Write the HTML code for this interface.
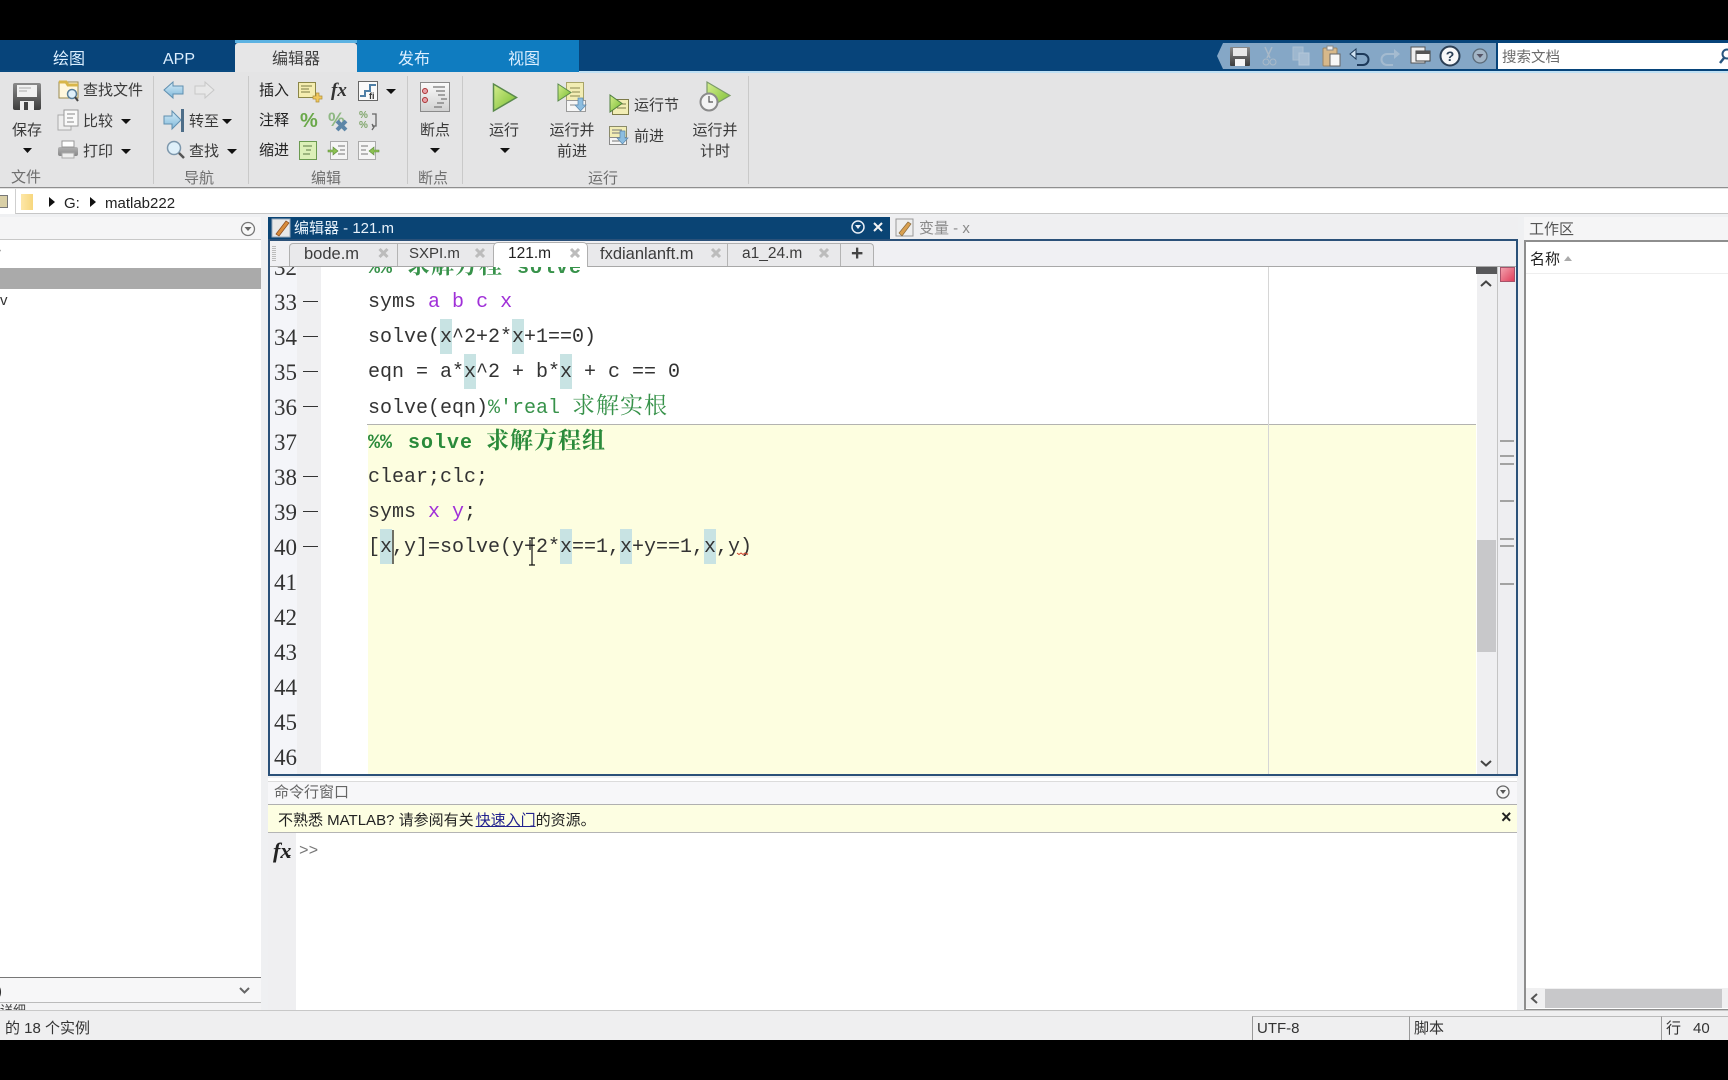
<!DOCTYPE html>
<html lang="zh">
<head>
<meta charset="utf-8">
<title>MATLAB</title>
<style>
html,body{margin:0;padding:0;width:1728px;height:1080px;overflow:hidden;background:#000}
body{position:relative;font-family:"Liberation Sans","Noto Sans CJK SC",sans-serif;color:#333}
.b{position:absolute}
.t{position:absolute;white-space:nowrap;line-height:1}
.c{transform:translateX(-50%)}
.rb{font-size:15px;color:#3a3a3a}
.lb{font-size:15px;color:#6e6e6e}
.tab{font-size:16px;color:#dcefff}
.code{position:absolute;left:368px;height:35px;line-height:37px;font-family:"Liberation Mono","Noto Serif CJK SC",monospace;font-size:20px;color:#333;white-space:pre}
.num{position:absolute;left:274px;width:24px;height:35px;line-height:37px;font-family:"Liberation Serif",serif;font-size:23px;color:#333}
.dash{position:absolute;left:303px;width:15px;height:1px;background:#333}
.hl{position:absolute;width:12px;height:35px;background:#c8e3e3}
.p{color:#a030d8}
.g{color:#37924a}
.cj{font-size:23px;letter-spacing:1px}
.ft{position:absolute;top:241px;height:26px;line-height:26px;font-size:15.500px;color:#3c3c3c;white-space:nowrap}
.mk{position:absolute;left:1500px;width:14px;height:2px;background:#a2a2a2}
</style>
</head>
<body>
<!-- tab strip -->
<div class="b" style="left:0;top:40px;width:1728px;height:32px;background:#07447a"></div>
<div class="b" style="left:357px;top:40px;width:222px;height:32px;background:#0f7cc0"></div>
<div class="b" style="left:235px;top:40px;width:122px;height:3px;background:#5cb2e2"></div>
<div class="b" style="left:235px;top:43px;width:122px;height:29px;background:#e6e6e7;border-radius:3px 3px 0 0"></div>
<div class="b" style="left:0;top:70px;width:235px;height:2px;background:#0a4a80"></div>
<div class="t tab" style="left:53px;top:52px">绘图</div>
<div class="t tab" style="left:163px;top:52px">APP</div>
<div class="t" style="left:272px;top:52px;font-size:16px;color:#404040">编辑器</div>
<div class="t tab" style="left:398px;top:52px">发布</div>
<div class="t tab" style="left:508px;top:52px">视图</div>
<!-- ribbon -->
<div class="b" style="left:0;top:72px;width:1728px;height:115px;background:#e4e4e5"></div>
<div class="b" style="left:579px;top:71px;width:1149px;height:2px;background:#bfe0f4"></div>
<div class="b" style="left:0;top:187px;width:1728px;height:1px;background:#8f8f8f"></div>
<div class="b" style="left:0;top:188px;width:1728px;height:1px;background:#e2e2e2"></div>
<!-- separators -->
<div class="b" style="left:153px;top:76px;width:1px;height:108px;background:#c9c9c9"></div>
<div class="b" style="left:248px;top:76px;width:1px;height:108px;background:#c9c9c9"></div>
<div class="b" style="left:407px;top:76px;width:1px;height:108px;background:#c9c9c9"></div>
<div class="b" style="left:462px;top:76px;width:1px;height:108px;background:#c9c9c9"></div>
<div class="b" style="left:748px;top:76px;width:1px;height:108px;background:#c9c9c9"></div>
<!-- ribbon text -->
<div class="t rb c" style="left:27px;top:123px">保存</div>
<div class="t lb c" style="left:26px;top:170px">文件</div>
<div class="t rb" style="left:83px;top:83px">查找文件</div>
<div class="t rb" style="left:83px;top:114px">比较</div>
<div class="t rb" style="left:83px;top:144px">打印</div>
<div class="t rb" style="left:189px;top:114px">转至</div>
<div class="t rb" style="left:189px;top:144px">查找</div>
<div class="t lb c" style="left:199px;top:171px">导航</div>
<div class="t rb" style="left:259px;top:83px;color:#222">插入</div>
<div class="t rb" style="left:259px;top:113px;color:#222">注释</div>
<div class="t rb" style="left:259px;top:143px;color:#222">缩进</div>
<div class="t lb c" style="left:326px;top:171px">编辑</div>
<div class="t rb c" style="left:435px;top:123px">断点</div>
<div class="t lb c" style="left:433px;top:171px">断点</div>
<div class="t rb c" style="left:504px;top:123px">运行</div>
<div class="t rb c" style="left:572px;top:123px">运行并</div>
<div class="t rb c" style="left:572px;top:144px">前进</div>
<div class="t rb" style="left:634px;top:98px">运行节</div>
<div class="t rb" style="left:634px;top:129px">前进</div>
<div class="t rb c" style="left:715px;top:123px">运行并</div>
<div class="t rb c" style="left:715px;top:144px">计时</div>
<div class="t lb c" style="left:603px;top:171px">运行</div>
<!-- address bar -->
<div class="b" style="left:0;top:189px;width:1728px;height:25px;background:#fff"></div>
<div class="b" style="left:15px;top:189px;width:1713px;height:25px;border-left:1px solid #cfcfcf;border-bottom:1px solid #c6c6c6;box-sizing:border-box"></div>
<div class="b" style="left:0;top:195px;width:8px;height:13px;background:#d9cfa6;border:1px solid #777;border-left:0;box-sizing:border-box"></div>
<div class="b" style="left:21px;top:194px;width:12px;height:16px;background:linear-gradient(90deg,#fde7a8,#f7d77e)"></div>
<div class="t" style="left:64px;top:196px;font-size:15px;color:#222">G:</div>
<div class="t" style="left:105px;top:196px;font-size:15px;color:#222">matlab222</div>
<!-- main background -->
<div class="b" style="left:0;top:214px;width:1728px;height:796px;background:#eff0f2"></div>
<!-- left panel -->
<div class="b" style="left:0;top:217px;width:261px;height:23px;background:#f5f5f6;border-bottom:1px solid #c8c8c8;box-sizing:border-box"></div>
<div class="b" style="left:0;top:240px;width:261px;height:737px;background:#fff"></div>
<div class="b" style="left:0;top:268px;width:261px;height:21px;background:#aaa"></div>
<div class="t" style="left:0;top:293px;font-size:15px;color:#333">v</div>
<div class="t" style="left:-5px;top:246px;font-size:12px;color:#888">▾</div>
<div class="b" style="left:0;top:977px;width:261px;height:26px;background:#f7f7f8;border-top:1px solid #777;border-bottom:1px solid #bbb;box-sizing:border-box"></div>
<div class="t" style="left:-3px;top:984px;font-size:15px;color:#333">)</div>
<div class="b" style="left:0;top:1003px;width:261px;height:7px;background:#f3f3f4"></div>
<div class="b" style="left:0;top:1004px;width:30px;height:6px;overflow:hidden"><div class="t" style="left:0;top:0;font-size:13px;color:#444">详细</div></div>
<!-- editor -->
<div class="b" style="left:268px;top:217px;width:622px;height:23px;background:#0a4474"></div>
<div class="b" style="left:890px;top:217px;width:628px;height:23px;background:#efeff1"></div>
<div class="t" style="left:294px;top:220px;font-size:15px;line-height:18px;color:#e8f2fb">编辑器 - 121.m</div>
<div class="t" style="left:919px;top:220px;font-size:15px;line-height:18px;color:#8a8a8a">变量 - x</div>
<div class="b" style="left:268px;top:240px;width:1250px;height:536px;box-sizing:border-box;border:2px solid #2b5179;border-top:none;background:#fff"></div>
<div class="b" style="left:268px;top:239px;width:1250px;height:2px;background:#2b5179"></div>
<!-- code gutter -->
<div class="b" style="left:270px;top:267px;width:27px;height:507px;background:#f4f5f9"></div>
<div class="b" style="left:297px;top:267px;width:24px;height:507px;background:#efeff1"></div>
<!-- yellow cell -->
<div class="b" style="left:368px;top:424px;width:1108px;height:350px;background:#fdfee0"></div>
<div class="b" style="left:367px;top:424px;width:1109px;height:1px;background:#b3b3b0"></div>
<div class="b" style="left:1268px;top:267px;width:1px;height:507px;background:#d6d6d6"></div>
<!-- highlights -->
<div class="hl" style="left:440px;top:319px"></div>
<div class="hl" style="left:512px;top:319px"></div>
<div class="hl" style="left:464px;top:354px"></div>
<div class="hl" style="left:560px;top:354px"></div>
<div class="hl" style="left:380px;top:529px"></div>
<div class="hl" style="left:560px;top:529px"></div>
<div class="hl" style="left:620px;top:529px"></div>
<div class="hl" style="left:704px;top:529px"></div>
<!-- line numbers -->
<div class="num" style="top:249px">32</div>
<div class="num" style="top:284px">33</div>
<div class="num" style="top:319px">34</div>
<div class="num" style="top:354px">35</div>
<div class="num" style="top:389px">36</div>
<div class="num" style="top:424px">37</div>
<div class="num" style="top:459px">38</div>
<div class="num" style="top:494px">39</div>
<div class="num" style="top:529px">40</div>
<div class="num" style="top:564px">41</div>
<div class="num" style="top:599px">42</div>
<div class="num" style="top:634px">43</div>
<div class="num" style="top:669px">44</div>
<div class="num" style="top:704px">45</div>
<div class="num" style="top:739px">46</div>
<div class="dash" style="top:301px"></div>
<div class="dash" style="top:336px"></div>
<div class="dash" style="top:371px"></div>
<div class="dash" style="top:406px"></div>
<div class="dash" style="top:476px"></div>
<div class="dash" style="top:511px"></div>
<div class="dash" style="top:546px"></div>
<!-- code -->
<div class="code g" style="top:249px;font-weight:bold">%% <span class="cj" style="margin-left:3px">求解方程</span> <span style="margin-left:2px;letter-spacing:1px">solve</span></div>
<div class="code" style="top:284px">syms <span class="p">a</span> <span class="p">b</span> <span class="p">c</span> <span class="p">x</span></div>
<div class="code" style="top:319px">solve(x^2+2*x+1==0)</div>
<div class="code" style="top:354px">eqn = a*x^2 + b*x + c == 0</div>
<div class="code" style="top:389px">solve(eqn)<span class="g">%'real <span class="cj">求解实根</span></span></div>
<div class="code g" style="top:424px;font-weight:bold;color:#2a8a3a">%% <span style="margin-left:4px;letter-spacing:1px">solve</span> <span class="cj" style="margin-left:1px">求解方程组</span></div>
<div class="code" style="top:459px">clear;clc;</div>
<div class="code" style="top:494px">syms <span class="p">x</span> <span class="p">y</span>;</div>
<div class="code" style="top:529px">[x,y]=solve(y+2*x==1,x+y==1,x,y)</div>
<!-- tab row (covers the clipped line) -->
<div class="b" style="left:270px;top:241px;width:1246px;height:26px;background:#f0f0f3;border-bottom:1px solid #a8a8a8;box-sizing:border-box"></div>
<div class="b" style="left:272px;top:246px;width:4px;height:16px;background:repeating-linear-gradient(#bbb 0 1px,transparent 1px 2px)"></div>
<div class="b" style="left:289px;top:243px;width:585px;height:23px;background:#e9e9eb;border:1px solid #b0b0b0;border-bottom:0;border-radius:4px 4px 0 0;box-sizing:border-box"></div>
<div class="b" style="left:397px;top:244px;width:1px;height:22px;background:#b4b4b4"></div>
<div class="b" style="left:727px;top:244px;width:1px;height:22px;background:#b4b4b4"></div>
<div class="b" style="left:840px;top:244px;width:1px;height:22px;background:#b4b4b4"></div>
<div class="b" style="left:493px;top:242px;width:95px;height:25px;background:#fff;border:1px solid #b0b0b0;border-bottom:0;border-radius:5px 5px 0 0;box-sizing:border-box"></div>
<div class="ft" style="left:304px;font-size:16.500px">bode.m</div>
<div class="ft" style="left:409px;font-size:15px">SXPI.m</div>
<div class="ft" style="left:508px;color:#222">121.m</div>
<div class="ft" style="left:600px;font-size:16.500px">fxdianlanft.m</div>
<div class="ft" style="left:742px">a1_24.m</div>
<div class="t" style="left:851px;top:244px;font-size:21px;font-weight:bold;line-height:20px;color:#444">+</div>
<!-- scrollbars in editor -->
<div class="b" style="left:1477px;top:267px;width:20px;height:507px;background:#efeff1"></div>
<div class="b" style="left:1497px;top:267px;width:19px;height:507px;background:#eeeef1;border-left:1px solid #c4c4c4;box-sizing:border-box"></div>
<div class="b" style="left:1476px;top:267px;width:21px;height:7px;background:#58585a"></div>
<div class="b" style="left:1500px;top:267px;width:15px;height:15px;background:linear-gradient(135deg,#f2a0ac,#e0405c);border:1px solid #a8526a;box-sizing:border-box"></div>
<div class="b" style="left:1477px;top:540px;width:19px;height:112px;background:#c8c8ca"></div>
<div class="mk" style="top:440px"></div>
<div class="mk" style="top:455px"></div>
<div class="mk" style="top:463px"></div>
<div class="mk" style="top:500px"></div>
<div class="mk" style="top:538px"></div>
<div class="mk" style="top:545px"></div>
<div class="mk" style="top:583px"></div>
<!-- command window -->
<div class="b" style="left:268px;top:778px;width:1249px;height:232px;background:#fff"></div>
<div class="b" style="left:268px;top:781px;width:1249px;height:24px;background:#f7f7f9;border-top:1px solid #dcdcdc;border-bottom:1px solid #b0b0b0;box-sizing:border-box"></div>
<div class="b" style="left:268px;top:805px;width:1249px;height:28px;background:#fdfee2;border-bottom:1px solid #b4b4b4;box-sizing:border-box"></div>
<div class="b" style="left:268px;top:833px;width:28px;height:177px;background:#efeff1"></div>
<div class="t" style="left:274px;top:785px;font-size:15px;color:#666">命令行窗口</div>
<div class="t" style="left:278px;top:813px;font-size:15px;color:#222">不熟悉 MATLAB? 请参阅有关<span style="color:#23238e;text-decoration:underline;margin-left:2px">快速入门</span>的资源。</div>
<div class="t" style="left:1501px;top:808px;font-size:18px;font-weight:bold;color:#222">×</div>
<div class="t" style="left:273px;top:840px;font-family:'Liberation Serif',serif;font-style:italic;font-weight:bold;font-size:22px;color:#222">fx</div>
<div class="t" style="left:299px;top:843px;font-family:'Liberation Mono',monospace;font-size:16px;color:#777">&gt;&gt;</div>
<!-- workspace -->
<div class="b" style="left:1524px;top:217px;width:204px;height:23px;background:#f5f5f6"></div>
<div class="b" style="left:1524px;top:240px;width:204px;height:770px;background:#fff;border:2px solid #8e8e8e;border-right:0;border-bottom-width:1px;box-sizing:border-box"></div>
<div class="t" style="left:1529px;top:222px;font-size:15px;color:#555">工作区</div>
<div class="t" style="left:1530px;top:252px;font-size:15px;color:#222">名称</div>
<div class="b" style="left:1526px;top:273px;width:202px;height:1px;background:#eee"></div>
<div class="b" style="left:1564px;top:256px;width:0;height:0;border-left:4px solid transparent;border-right:4px solid transparent;border-bottom:5px solid #aaa"></div>
<div class="b" style="left:1526px;top:988px;width:202px;height:20px;background:#f0f0f1"></div>
<div class="b" style="left:1545px;top:989px;width:177px;height:19px;background:#c8c8ca"></div>
<!-- status bar -->
<div class="b" style="left:0;top:1010px;width:1728px;height:30px;background:#efeff0;border-top:1px solid #c8c8c8;box-sizing:border-box"></div>
<div class="b" style="left:1252px;top:1016px;width:157px;height:24px;border-left:1px solid #999;border-top:1px solid #bbb;box-sizing:border-box"></div>
<div class="b" style="left:1409px;top:1016px;width:252px;height:24px;border-left:1px solid #999;border-top:1px solid #bbb;box-sizing:border-box"></div>
<div class="b" style="left:1661px;top:1016px;width:67px;height:24px;border-left:1px solid #999;border-top:1px solid #bbb;box-sizing:border-box"></div>
<div class="t" style="left:5px;top:1021px;font-size:15px;color:#333">的 18 个实例</div>
<div class="t" style="left:1257px;top:1021px;font-size:15px;color:#333">UTF-8</div>
<div class="t" style="left:1414px;top:1021px;font-size:15px;color:#333">脚本</div>
<div class="t" style="left:1666px;top:1021px;font-size:15px;color:#333">行</div>
<div class="t" style="left:1693px;top:1021px;font-size:15px;color:#333">40</div>
<!-- quick access -->
<div class="b" style="left:1217px;top:43px;width:279px;height:26px;background:#85a7c6;clip-path:polygon(6px 0,100% 0,100% 100%,6px 100%,0 50%)"></div>
<div class="b" style="left:1498px;top:43px;width:230px;height:26px;background:#fff"></div>
<div class="t" style="left:1502px;top:51px;font-size:14.500px;color:#6c6c6c">搜索文档</div>
<!-- icons -->
<svg class="b" style="left:0;top:0" width="1728" height="1080" viewBox="0 0 1728 1080" fill="none">
<defs>
<linearGradient id="gs" x1="0" y1="0" x2="0" y2="1"><stop offset="0" stop-color="#8a8a8a"/><stop offset="1" stop-color="#3d3d3d"/></linearGradient>
<linearGradient id="gg" x1="0" y1="0" x2="1" y2="1"><stop offset="0" stop-color="#d6ee8e"/><stop offset="1" stop-color="#74bb2e"/></linearGradient>
<linearGradient id="gb" x1="0" y1="0" x2="0" y2="1"><stop offset="0" stop-color="#d6ecf8"/><stop offset="1" stop-color="#7fb8da"/></linearGradient>
<linearGradient id="gp" x1="0" y1="0" x2="0" y2="1"><stop offset="0" stop-color="#fbfbfb"/><stop offset="1" stop-color="#d0d0d0"/></linearGradient>
</defs>
<!-- save big -->
<rect x="13" y="83" width="28" height="27" rx="2" fill="url(#gs)"/>
<rect x="17" y="85" width="20" height="12" fill="#f1f1f1"/>
<path d="M19 88h12M19 91h8" stroke="#aaa"/>
<rect x="20" y="101" width="14" height="9" fill="#eee"/><rect x="24" y="102" width="4" height="8" fill="#444"/>
<!-- dropdown arrows -->
<g fill="#111" transform="translate(0 1)">
<path d="M23 147h9l-4.500 5zM121 118h10l-5 5zM121 148h10l-5 5zM222 118h10l-5 5zM227 148h10l-5 5zM386 88h10l-5 5zM430 147h10l-5 5zM500 147h10l-5 5z"/>
</g>
<!-- find files -->
<path d="M59 82h19v16H59z" fill="#fff7dd" stroke="#9a8a50"/><path d="M59 82h7l2 3h10" stroke="#d8b64a" stroke-width="3"/>
<circle cx="72" cy="94" r="4.500" fill="#dff0fa" stroke="#5a7f9a" stroke-width="1.500"/><path d="M75 97l3 4" stroke="#444" stroke-width="2"/>
<!-- compare -->
<rect x="58" y="115" width="13" height="15" fill="#eee" stroke="#aaa"/><rect x="64" y="110" width="14" height="16" fill="#fafafa" stroke="#999"/>
<path d="M67 114h8M67 118h6M67 122h7" stroke="#888"/>
<!-- print -->
<rect x="62" y="141" width="12" height="6" fill="#fff" stroke="#999"/><rect x="58" y="147" width="20" height="9" rx="2" fill="url(#gs)" opacity=".55"/><rect x="62" y="153" width="12" height="5" fill="#eee" stroke="#aaa"/>
<!-- back/forward -->
<path d="M164 90l9-8v4h10v8h-10v4z" fill="url(#gb)" stroke="#5f8fb0"/>
<path d="M214 90l-9-8v4h-10v8h10v4z" fill="#e8e8e8" stroke="#c8c8c8"/>
<!-- goto -->
<path d="M164 116h8v-5l9 9-9 9v-5h-8z" fill="url(#gb)" stroke="#5f8fb0"/><rect x="181" y="109" width="3" height="23" fill="#4d6d88"/>
<!-- find -->
<circle cx="174" cy="148" r="6.500" fill="#dff0fa" stroke="#7d97ac" stroke-width="1.500"/><path d="M179 153l5 5" stroke="#555" stroke-width="2.500"/>
<!-- insert etc -->
<rect x="298.500" y="82.500" width="17" height="15" fill="#f5edb0" stroke="#8b8648"/><path d="M301 86h11M301 89h8M301 92h9" stroke="#7b7a45"/>
<path d="M313 96h3v-3h3v3h3v3h-3v3h-3v-3h-3z" fill="#f1c95e" stroke="#b08e38" stroke-width=".7"/>
<text x="331" y="96" font-family="Liberation Serif,serif" font-size="19" font-weight="bold" font-style="italic" fill="#333">fx</text>
<rect x="358.500" y="81.500" width="19" height="19" fill="#fafafa" stroke="#666"/><path d="M360 96h5v-5h5v-6h6" stroke="#4f7fa6" stroke-width="2"/>
<text x="369" y="99" font-family="Liberation Sans,sans-serif" font-size="9" font-weight="bold" fill="#333">fi</text>
<!-- comment row -->
<text x="300" y="127" font-family="Liberation Sans,sans-serif" font-size="20" fill="#6aa84a" font-weight="bold">%</text>
<text x="328" y="126" font-family="Liberation Sans,sans-serif" font-size="19" fill="#8fb884" font-weight="bold">%</text>
<path d="M337 121l9 9M346 121l-9 9" stroke="#5d86a8" stroke-width="4"/>
<text x="359" y="118" font-family="Liberation Sans,sans-serif" font-size="10" fill="#7fa56a" font-weight="bold">%</text>
<text x="359" y="128" font-family="Liberation Sans,sans-serif" font-size="10" fill="#7fa56a" font-weight="bold">%</text>
<path d="M372 114h4v12h-4M372 124l2 3-2 3" stroke="#666" stroke-width="1.300"/>
<!-- indent row -->
<rect x="299.500" y="141.500" width="17" height="18" fill="#dcf0b8" stroke="#6b9a50"/><path d="M303 146h9M306 150h5M303 154h7" stroke="#5c7a44"/>
<rect x="330.500" y="141.500" width="17" height="18" fill="#f5f5f5" stroke="#aaa"/><path d="M338 146h7M340 150h5M338 154h7" stroke="#777"/><path d="M328 150h5v-3l5 4-5 4v-3h-5z" fill="#8cc152" stroke="#5c8a3a" stroke-width=".6"/>
<rect x="358.500" y="141.500" width="17" height="18" fill="#f5f5f5" stroke="#aaa"/><path d="M361 146h7M361 150h5M361 154h7" stroke="#777"/><path d="M379 150h-5v-3l-5 4 5 4v-3h5z" fill="#8cc152" stroke="#5c8a3a" stroke-width=".6"/>
<!-- breakpoint -->
<rect x="420.500" y="82.500" width="29" height="29" fill="url(#gp)" stroke="#8a8a8a"/>
<circle cx="425" cy="91" r="2.500" fill="#e8a0a8" stroke="#a33"/><circle cx="425" cy="100" r="2.500" fill="#e8a0a8" stroke="#a33"/>
<path d="M433 87h12M436 91h9M438 95h7M441 99h6M437 103h7M434 107h8" stroke="#777" stroke-width="1.200"/>
<!-- run -->
<path d="M493.500 84v27l23-13.500z" fill="url(#gg)" stroke="#5a8a4c" stroke-width="1.500"/>
<!-- run advance -->
<rect x="566.500" y="82.500" width="17" height="18" fill="#f2edb4" stroke="#a8a468"/><path d="M570 88h10M572 92h8M570 96h10" stroke="#8a8650"/>
<rect x="566.500" y="100.500" width="19" height="11" fill="#f6f6f6" stroke="#9a9a9a"/><path d="M570 105h10" stroke="#888"/>
<path d="M558 84v17l13-8.500z" fill="url(#gg)" stroke="#5a8a4c"/>
<path d="M578 98h5v7h3l-5.500 6-5.500-6h3z" fill="#8cbde0" stroke="#5b87ab" stroke-width=".7"/>
<!-- run section -->
<rect x="612.500" y="99.500" width="16" height="15" fill="#f2edb4" stroke="#7c7a48"/><path d="M619 104h7M617 108h9" stroke="#7c7a48"/>
<path d="M610 95v17l12-8.500z" fill="url(#gg)" stroke="#4f7f3f"/>
<!-- advance -->
<rect x="609.500" y="126.500" width="17" height="11" fill="#f2edb4" stroke="#8a8a6a"/><rect x="609.500" y="137.500" width="17" height="7" fill="#f6f6f6" stroke="#8a8a8a"/><path d="M612 130h10M612 133h8M612 141h9" stroke="#777"/>
<path d="M620 131h5v7h3l-5.500 6-5.500-6h3z" fill="#8cbde0" stroke="#5b87ab" stroke-width=".7"/>
<!-- run timed -->
<path d="M707 82v27l23-13.500z" fill="url(#gg)" stroke="#7b9a6a" stroke-width="1.200"/>
<circle cx="709" cy="102" r="8.500" fill="#f4f4f4" stroke="#8a8a8a" stroke-width="2"/><path d="M709 96v6h4" stroke="#555" stroke-width="1.200"/>
<!-- editor title icons -->
<rect x="272" y="219" width="18" height="18" fill="#e8e8e8" stroke="#9ab"/><path d="M276 234l10-13 3 2-10 13z" fill="#d88c3c" stroke="#8a4a1c" stroke-width=".7"/>
<circle cx="858" cy="227" r="6" fill="#0a4474" stroke="#e8eef6" stroke-width="1.500"/><path d="M855 225h6l-3 4z" fill="#e8eef6"/>
<path d="M874 223l8 8M882 223l-8 8" stroke="#f4f4f4" stroke-width="2"/>
<rect x="896" y="219" width="17" height="17" fill="#eee" stroke="#999"/><path d="M899 233l9-11 3 2-9 12z" fill="#d9a050" stroke="#8a6a3c" stroke-width=".7"/>
<!-- editor tab close icons -->
<path d="M379.500 249l8 8M387.500 249l-8 8M476 249l8 8M484 249l-8 8M571 249l8 8M579 249l-8 8M712 249l8 8M720 249l-8 8M820 249l8 8M828 249l-8 8" stroke="#bcbcbc" stroke-width="3"/>
<!-- left panel menu -->
<circle cx="248" cy="229" r="6.500" fill="#f8f8f8" stroke="#777" stroke-width="1.300"/><path d="M244.500 227h7l-3.500 4z" fill="#666"/>
<!-- chevrons -->
<path d="M1481 286l5-4.500 5 4.500" stroke="#444" stroke-width="2"/>
<path d="M1481 761l5 4.500 5-4.500" stroke="#444" stroke-width="2"/>
<path d="M240 988l4.500 4.500 4.500-4.500" stroke="#666" stroke-width="2"/>
<path d="M1537 994l-5 4.500 5 4.500" stroke="#555" stroke-width="2"/>
<!-- address triangles -->
<path d="M49 197l6 5-6 5zM90 197l6 5-6 5z" fill="#111"/>
<!-- command menu -->
<circle cx="1503" cy="792" r="6" fill="#f6f6f6" stroke="#666" stroke-width="1.300"/><path d="M1500 790h6l-3 4z" fill="#555"/>
<path d="M286 855h5l-2.500 3z" fill="#222"/>
<!-- caret and I-beam -->
<path d="M393 530v34" stroke="#111" stroke-width="1.200"/>
<path d="M529 538h6M532 538v27M529 565h6" stroke="#111" stroke-width="1.200"/>
<path d="M737 553l2 1.500 2-1.500 2 1.500 2-1.500 2 1.500 1-1" stroke="#d0402a" stroke-width="1"/>
<!-- quick access icons -->
<rect x="1230" y="47" width="20" height="19" rx="1" fill="url(#gs)"/><rect x="1233" y="48" width="14" height="8" fill="#e8e8e8"/><rect x="1235" y="59" width="10" height="7" fill="#f5f5f5"/>
<path d="M1272 47l-5 11M1265 47l5 11" stroke="#a9b9c8" stroke-width="1.500"/><circle cx="1266" cy="62" r="3" stroke="#a9b9c8"/><circle cx="1273" cy="62" r="3" stroke="#a9b9c8"/>
<rect x="1293" y="47" width="10" height="13" fill="#9db7cf" stroke="#aabfd2"/><rect x="1299" y="53" width="10" height="12" fill="#a6bdd3" stroke="#b4c7d9"/>
<rect x="1323" y="48" width="14" height="18" rx="1" fill="#d7b88a" stroke="#9a8464"/><rect x="1330" y="54" width="10" height="12" fill="#f6f6f6" stroke="#666"/><rect x="1327" y="46" width="6" height="4" fill="#eee" stroke="#888"/>
<path d="M1352 54h11a5.500 5.500 0 0 1 0 11h-6" stroke="#1e3a5a" stroke-width="2"/><path d="M1356 49l-6 5 6 5z" fill="#cfe2f2" stroke="#1e3a5a"/>
<path d="M1398 54h-11a5.500 5.500 0 0 0 0 11h6" stroke="#a4bbd0" stroke-width="2"/><path d="M1394 49l6 5-6 5z" fill="#a4bbd0"/>
<rect x="1411" y="47" width="14" height="16" fill="#eee" stroke="#555"/><rect x="1416" y="51" width="14" height="10" fill="#fafafa" stroke="#444"/><rect x="1416" y="51" width="14" height="3" fill="#555"/>
<circle cx="1450" cy="56" r="9.500" fill="#f8f8f8" stroke="#2b3f55" stroke-width="2"/>
<text x="1450" y="61" text-anchor="middle" font-family="Liberation Sans,sans-serif" font-size="14" font-weight="bold" fill="#2b3f55">?</text>
<circle cx="1480" cy="56" r="7" fill="#a2b5c6" stroke="#5a6a78" stroke-width="1.300"/><path d="M1476.500 54h7l-3.500 4z" fill="#556"/>
<!-- search glass -->
<circle cx="1727" cy="54" r="4.500" fill="#fff" stroke="#27557f" stroke-width="2"/><path d="M1724 58l-4 5" stroke="#27557f" stroke-width="2.500"/>
</svg>
<!-- black bars -->
<div class="b" style="left:0;top:0;width:1728px;height:40px;background:#000"></div>
<div class="b" style="left:0;top:1040px;width:1728px;height:40px;background:#000"></div>
</body>
</html>
